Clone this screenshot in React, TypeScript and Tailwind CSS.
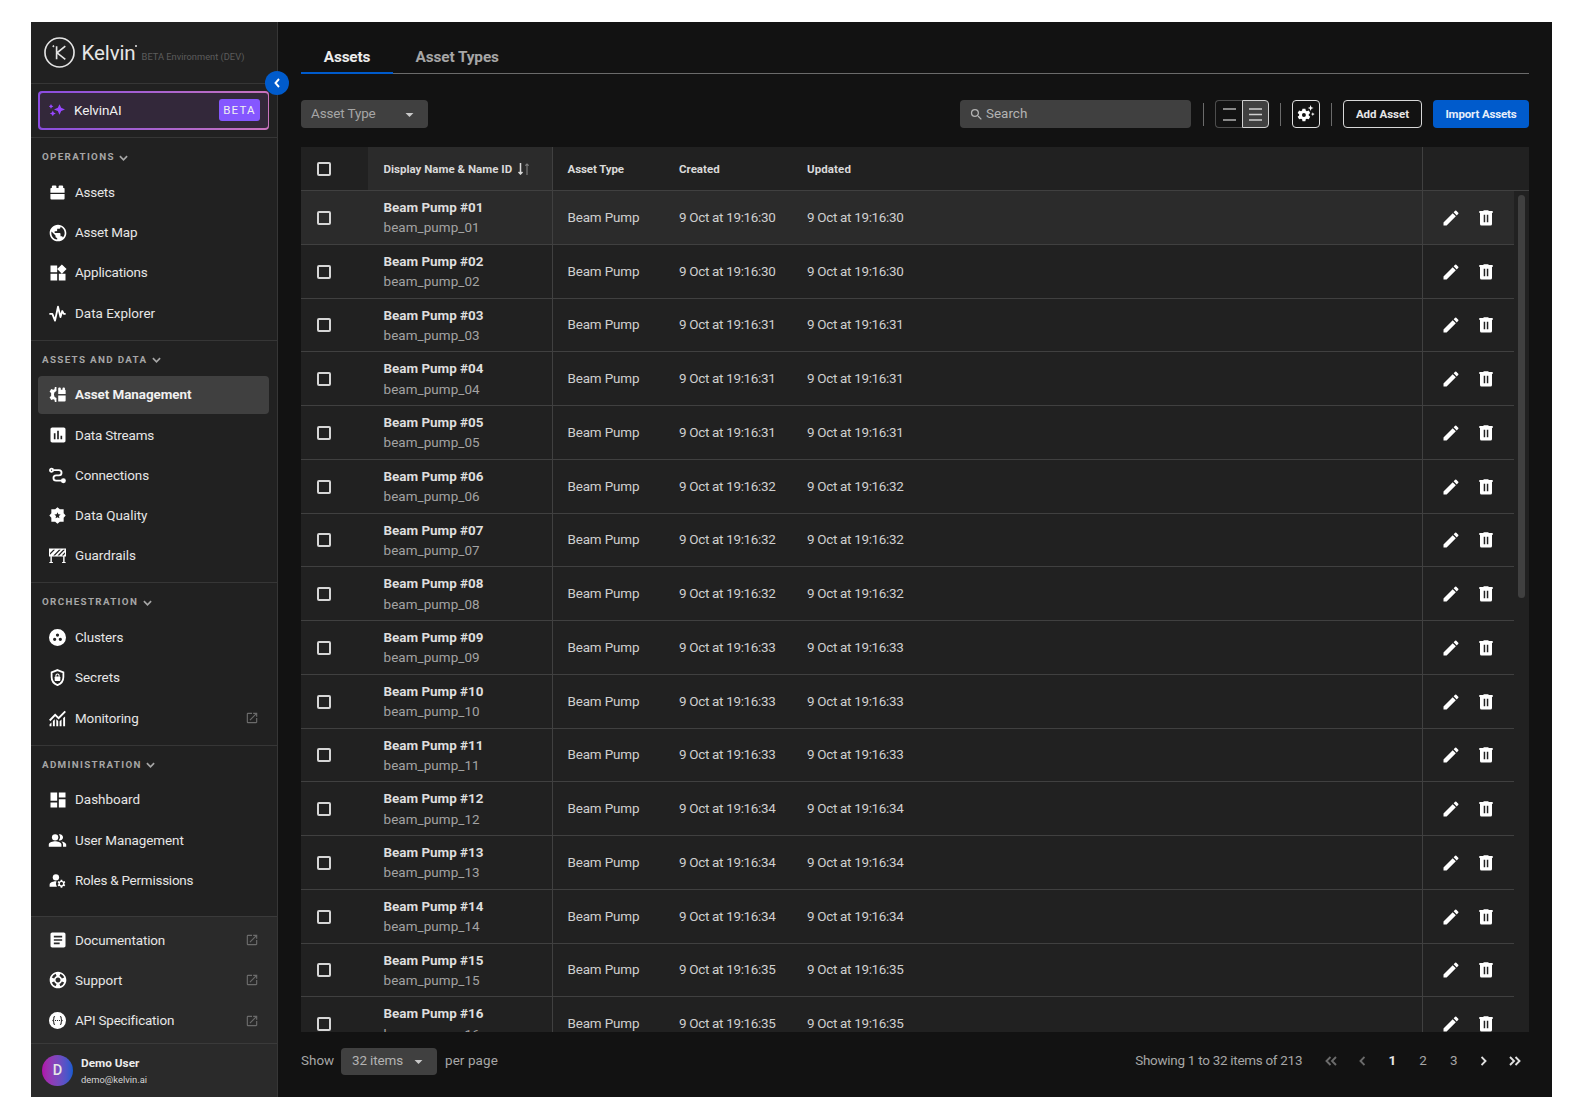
import type { ReactNode } from 'react';
import clsx from 'clsx';
import {
  MdArrowDropDown,
  MdArticle,
  MdDashboard,
  MdEdit,
  MdInsertChart,
  MdManageAccounts,
  MdOpenInNew,
  MdPeopleAlt,
  MdPublic,
  MdSearch,
  MdSupport,
  MdWidgets,
} from 'react-icons/md';

interface IconProps {
  className?: string;
}

interface NavEntry {
  label: string;
  icon: ReactNode;
  active?: boolean;
  external?: boolean;
  tracking?: string;
}

interface NavGroup {
  title: string;
  items: NavEntry[];
}

function Svg({ className, children }: IconProps & { children: ReactNode }) {
  return (
    <svg viewBox="0 0 24 24" fill="currentColor" className={clsx('size-[17px] shrink-0', className)}>
      {children}
    </svg>
  );
}

const BrickIcon = () => (
  <Svg>
    <path d="M4 5.800V3.500Q4 2 5.500 2H9q1.500 0 1.500 1.500v2.300h3V3.500Q13.500 2 15 2h3.500Q20 2 20 3.500v2.300h1q1 0 1 1V12.500H2V6.800q0-1 1-1ZM2 14h20V20.500q0 1.500-1.500 1.500h-17Q2 22 2 20.500Z" />
  </Svg>
);

const PulseIcon = () => (
  <Svg>
    <path
      d="M.5 12.500h4.200L8.500 22 12.700 2.500l3.500 14.500 2.500-8.500 2.200 4H23.500"
      fill="none"
      stroke="currentColor"
      strokeWidth="2.600"
      strokeLinejoin="round"
    />
  </Svg>
);

const AssetGearIcon = () => (
  <Svg>
    <path d="M10.500 1.500v5.700a5 5 0 0 0 0 9.600v5.700H8.300l-.6-3-1.700-.9-2.900 1L.8 16l2.200-1.900v-4.200L.8 8l2.300-3.600 2.900 1 1.700-.9.6-3Z" />
    <path d="M13 5.500V3.500Q13 2 14.500 2h.7Q16.700 2 16.700 3.500v1.700h2.300V3.500Q19 2 20.500 2h.5q1.500 0 1.500 1.500v1.700q1 0 1 1v5H13ZM13 13.500h10.500V20.500q0 1.500-1.500 1.500h-9Z" />
  </Svg>
);

const RouteIcon = () => (
  <Svg>
    <g fill="none" stroke="currentColor" strokeWidth="2.600">
      <circle cx="3.600" cy="4.500" r="2.200" />
      <path d="M6 4.500h8a3.700 3.700 0 0 1 0 7.400H10a3.700 3.700 0 0 0 0 7.400h8" />
    </g>
    <circle cx="20.300" cy="19.300" r="3.500" />
  </Svg>
);

const QualityIcon = () => (
  <Svg>
    <path
      fillRule="evenodd"
      d="M12 .5 15.300 3.300h5.400v5.400L23.500 12 20.700 15.300v5.400h-5.400L12 23.500 8.700 20.700H3.300v-5.400L.5 12 3.300 8.700V3.300h5.400ZM12 7.500l-1.300 2.900-3.100.3 2.300 2.100-.6 3.100 2.700-1.600 2.700 1.600-.6-3.100 2.300-2.100-3.100-.3Z"
    />
  </Svg>
);

const BarrierIcon = () => (
  <Svg>
    <path
      fillRule="evenodd"
      d="M0 2h24v11.500h-2V21h1.500v1.500h-5V21H20v-7.500H4V21h1.500v1.500h-5V21H2v-7.500H0ZM1.500 11 8.500 3.800H6L1.500 8.300ZM6 12h2.500l8-8.200H14ZM12 12h2.500l8-8V3.800H20ZM18 12h2.500l2-2V7.300Z"
    />
  </Svg>
);

const ClusterIcon = () => (
  <Svg>
    <path
      fillRule="evenodd"
      d="M12 0a12 12 0 1 0 0 24 12 12 0 0 0 0-24Zm0 6.200a2.300 2.300 0 1 1 0 4.600 2.300 2.300 0 0 1 0-4.600Zm-4 6.100a2.300 2.300 0 1 1 0 4.600 2.300 2.300 0 0 1 0-4.600Zm8 0a2.300 2.300 0 1 1 0 4.600 2.300 2.300 0 0 1 0-4.600Z"
    />
  </Svg>
);

const ShieldLockIcon = () => (
  <Svg>
    <path
      d="M12 1.500 20.300 4.800v6.500c0 5.200-3.300 9.600-8.300 11.400C7 20.900 3.700 16.500 3.700 11.300V4.800Z"
      fill="none"
      stroke="currentColor"
      strokeWidth="2.500"
    />
    <rect x="8" y="10.500" width="8" height="6.500" rx="1" />
    <path d="M9.800 11V9.200a2.200 2.200 0 0 1 4.400 0V11" fill="none" stroke="currentColor" strokeWidth="1.600" />
  </Svg>
);

const MonitoringIcon = () => (
  <Svg>
    <path d="M.8 23v-3l2.700-2.500V23ZM5.500 23v-7.500L8.200 13v10ZM10.300 23V13l2.700 2.500V23ZM15 23v-7.200l2.700-2.300V23ZM20 23V11.300L22.700 9v14Z" />
    <path d="m1 14.800 7.700-8 4.800 4.700L23 2" fill="none" stroke="currentColor" strokeWidth="2.700" />
  </Svg>
);

const ApiIcon = () => (
  <Svg>
    <circle cx="12" cy="12" r="12" />
    <g stroke="#2a2a2a" fill="none" strokeWidth="1.500">
      <path d="M8.500 6.500C6.500 6.500 6.800 8 6.800 9.500S6 12 4.800 12c1.200 0 2 1 2 2.500s-.3 3 1.700 3M15.500 6.500c2 0 1.700 1.500 1.700 3S18 12 19.200 12c-1.200 0-2 1-2 2.500s.3 3-1.700 3" />
      <path d="M8.300 12h1.600M11.200 12h1.600M14.100 12h1.600" strokeWidth="1.700" />
    </g>
  </Svg>
);

const SparklesIcon = () => (
  <svg viewBox="0 0 16 12" className="h-[12px] w-[16px] shrink-0 fill-[#9747ff]">
    <path d="m10.500.2 1.700 3.500L16 5.400l-3.800 1.700-1.700 3.700-1.700-3.700L5 5.400l3.800-1.700ZM2 0l.8 1.600 1.600.8-1.600.8L2 4.800l-.8-1.600L-.4 2.400l1.600-.8ZM3.800 6.500l.9 2.100 2.100.9-2.100.9-.9 2-.9-2-2.100-.9 2.100-.9Z" />
  </svg>
);

const GearPlusIcon = () => (
  <svg viewBox="0 0 24 24" className="size-[17.500px] fill-white">
    <path
      fillRule="evenodd"
      d="M7.500 5h4l.5 2.600 1.500.8 2.600-.9 2 3.400-2 1.800v1.700l2 1.800-2 3.400-2.600-.9-1.500.8-.5 2.700h-4L7 19.500l-1.500-.8-2.600.9-2-3.400 2-1.800v-1.700l-2-1.800 2-3.400 2.600.9L7 7.600ZM9.500 10.900a2.700 2.700 0 1 0 0 5.400 2.700 2.700 0 0 0 0-5.400Z"
    />
    <path d="m18.700 0 1.100 3 3 1.100-3 1.100-1.100 3-1.100-3-3-1.100 3-1.100ZM21.700 10l.7 1.800 1.800.7-1.800.7L21.700 15l-.7-1.800-1.800-.7 1.800-.7Z" />
  </svg>
);

const TrashIcon = () => (
  <svg viewBox="0 0 14 16" className="h-[16px] w-[14px] fill-white">
    <path
      fillRule="evenodd"
      d="M4.500.3h5v.8H13.700V3H13v11q0 1.500-1.500 1.500h-9Q1 15.500 1 14V3H.3V1.100h4.200ZM4.700 4.700v7.600h1.500V4.700ZM7.800 4.700v7.600h1.500V4.700Z"
    />
  </svg>
);

function Chevron({ className, d = 'M1 1l4 4 4-4', box = '0 0 10 6' }: IconProps & { d?: string; box?: string }) {
  return (
    <svg viewBox={box} className={className} fill="none" stroke="currentColor" strokeWidth="1.900">
      <path d={d} />
    </svg>
  );
}

const mdIcon = 'size-[19px] shrink-0';

const groups: NavGroup[] = [
  {
    title: 'Operations',
    items: [
      { label: 'Assets', icon: <BrickIcon />, tracking: 'tracking-[-0.25px]' },
      { label: 'Asset Map', icon: <MdPublic className="size-[20px] shrink-0" />, tracking: 'tracking-[-0.2px]' },
      { label: 'Applications', icon: <MdWidgets className="size-[20px] shrink-0" />, tracking: 'tracking-[-0.15px]' },
      { label: 'Data Explorer', icon: <PulseIcon /> },
    ],
  },
  {
    title: 'Assets and Data',
    items: [
      { label: 'Asset Management', icon: <AssetGearIcon />, active: true, tracking: 'tracking-[-0.07px]' },
      { label: 'Data Streams', icon: <MdInsertChart className="size-[20px] shrink-0" />, tracking: 'tracking-[-0.17px]' },
      { label: 'Connections', icon: <RouteIcon />, tracking: 'tracking-[-0.1px]' },
      { label: 'Data Quality', icon: <QualityIcon /> },
      { label: 'Guardrails', icon: <BarrierIcon /> },
    ],
  },
  {
    title: 'Orchestration',
    items: [
      { label: 'Clusters', icon: <ClusterIcon />, tracking: 'tracking-[-0.15px]' },
      { label: 'Secrets', icon: <ShieldLockIcon /> },
      { label: 'Monitoring', icon: <MonitoringIcon />, external: true, tracking: 'tracking-[-0.12px]' },
    ],
  },
  {
    title: 'Administration',
    items: [
      { label: 'Dashboard', icon: <MdDashboard className="size-[20px] shrink-0" /> },
      { label: 'User Management', icon: <MdPeopleAlt className={mdIcon} />, tracking: 'tracking-[-0.07px]' },
      { label: 'Roles & Permissions', icon: <MdManageAccounts className={mdIcon} />, tracking: 'tracking-[-0.23px]' },
    ],
  },
];

const helpLinks: NavEntry[] = [
  {
    label: 'Documentation',
    icon: <MdArticle className="size-[20px] shrink-0" />,
    external: true,
    tracking: 'tracking-[-0.12px]',
  },
  { label: 'Support', icon: <MdSupport className="size-[20px] shrink-0" />, external: true },
  { label: 'API Specification', icon: <ApiIcon />, external: true, tracking: 'tracking-[-0.18px]' },
];

const seconds = [30, 30, 31, 31, 31, 32, 32, 32, 33, 33, 33, 34, 34, 34, 35, 35];

const assets = seconds.map((sec, i) => {
  const num = String(i + 1).padStart(2, '0');
  return { name: `Beam Pump #${num}`, id: `beam_pump_${num}`, time: `9 Oct at 19:16:${sec}` };
});

function NavItem({ label, icon, active, external, tracking }: NavEntry) {
  return (
    <a
      className={clsx(
        'mr-[8px] mb-[1.600px] ml-[7px] flex h-[38.700px] items-center rounded-[4px] pr-[10.500px] pl-[10px] text-[13.440px]',
        active ? 'bg-[#404040] font-bold text-[#f0f0f0]' : 'text-[#e6e6e6]'
      )}
    >
      <span className="flex w-[19px] shrink-0 justify-center text-white">{icon}</span>
      <span className={clsx('ml-[8px] flex-1 pt-[1px] whitespace-nowrap', tracking)}>{label}</span>
      {external && <MdOpenInNew className="size-[14px] text-[#6b6b6b]" />}
    </a>
  );
}

function Sidebar() {
  return (
    <aside className="relative flex w-[247px] shrink-0 flex-col border-r border-[#363636] bg-[#212121]">
      {/* Logo */}
      <div className="flex h-[61.500px] items-center border-b border-[#363636] pl-[12.500px]">
        <svg viewBox="0 0 32 32" className="size-[31px]" fill="none" stroke="#e4e4e4" strokeWidth="1.700">
          <circle cx="16" cy="16" r="15" />
          <path d="M13 9.500v13.500M22 9.500l-8.500 6.800L22 23" />
          <circle cx="9.700" cy="9.500" r=".6" fill="#e4e4e4" strokeWidth="1" />
        </svg>
        <span className="mt-px ml-[7px] text-[20.500px] leading-none font-normal tracking-[-0.1px] text-[#e6e6e6]">
          Kelvin
        </span>
        <span className="-mt-[13px] -ml-[1px] size-[2px] rounded-full bg-[#e4e4e4]" />
        <span className="mt-[10px] ml-[5px] text-[9.300px] whitespace-nowrap text-[#5c5c5c]">BETA Environment (DEV)</span>
      </div>

      {/* KelvinAI */}
      <div className="h-[54.500px] shrink-0 border-b border-[#363636] pt-[7.500px] pr-[8px] pl-[7px]">
        <div className="h-[38.500px] rounded-[4px] bg-linear-to-r from-[#8a4be0] to-[#c873bd] p-[1.500px]">
          <div className="flex h-full items-center rounded-[3px] bg-[#33283a] pr-[8px] pl-[9.500px] text-[13.440px] text-[#f0f0f0]">
            <SparklesIcon />
            <span className="ml-[9px] flex-1 pt-[1px] tracking-[-0.1px]">KelvinAI</span>
            <span className="flex h-[22px] w-[41px] items-center justify-center rounded-[3px] bg-[#8557ff] pl-px text-[11.500px] tracking-[1.200px]">
              BETA
            </span>
          </div>
        </div>
      </div>

      <span className="absolute top-[49px] right-[-12px] flex size-[24px] items-center justify-center rounded-full bg-[#005bcc] text-white">
        <Chevron className="h-[10px] w-[6px]" d="M5 1 1.500 5 5 9" box="0 0 6 10" />
      </span>

      {groups.map((group, i) => (
        <section key={group.title} className={clsx('pb-[5.400px]', i < groups.length - 1 && 'border-b border-[#363636]')}>
          <h3 className="flex h-[35px] items-center pt-[4px] pl-[11px] text-[9.800px] font-bold tracking-[1.330px] text-[#a6a6a6] uppercase">
            {group.title}
            <Chevron className="ml-[4.500px] h-[6px] w-[9px]" />
          </h3>
          {group.items.map((item) => (
            <NavItem key={item.label} {...item} />
          ))}
        </section>
      ))}

      {/* Help links and account */}
      <div className="mt-auto border-t border-[#3a3a3a] bg-[#2a2a2a] pt-[4px]">
        {helpLinks.map((item) => (
          <NavItem key={item.label} {...item} />
        ))}
        <div className="mt-[3px] flex h-[54px] items-center border-t border-[#3a3a3a] pl-[11px]">
          <span className="flex size-[31px] items-center justify-center rounded-full bg-linear-to-r from-[#b10dab] to-[#0d5bd0] text-[14.500px] font-medium text-[#e6e6e6]">
            D
          </span>
          <div className="ml-[8px] pt-px">
            <p className="text-[11.800px] leading-[17px] font-bold text-[#ececec]">Demo User</p>
            <p className="text-[9.400px] leading-[16px] text-[#d6d6d6]">demo@kelvin.ai</p>
          </div>
        </div>
      </div>
    </aside>
  );
}

function Separator() {
  return <span className="h-[23px] w-px bg-[#6b6b6b]" />;
}

function Toolbar() {
  return (
    <div className="mt-[26px] flex h-[28px] items-center">
      <button className="flex h-[28px] w-[127px] items-center justify-between rounded-[4px] bg-[#404040] pt-px pr-[9px] pl-[10px] text-[13.440px] tracking-[-0.12px] text-[#a6a6a6]">
        Asset Type
        <MdArrowDropDown className="size-[19px] text-[#c8c8c8]" />
      </button>
      <div className="ml-auto flex h-[28px] w-[231px] items-center rounded-[4px] bg-[#404040] pt-px pl-[9px] text-[13.440px] text-[#b3b3b3]">
        <MdSearch className="mr-[2px] size-[15px]" />
        Search
      </div>
      <span className="w-[11.500px]" />
      <Separator />
      <div className="ml-[11.500px] flex h-[28px] w-[54px]">
        <span className="flex flex-1 items-center justify-center rounded-l-[4px] border border-r-0 border-[#4d4d4d] text-[#b0b0b0]">
          <svg viewBox="0 0 13 13" className="size-[13px] stroke-current" strokeWidth="1.500">
            <path d="M0 1h13M0 12h13" />
          </svg>
        </span>
        <span className="flex w-[27px] items-center justify-center rounded-r-[4px] border border-[#d0d0d0] bg-[#404040] text-[#d0d0d0]">
          <svg viewBox="0 0 13 13" className="size-[13px] stroke-current" strokeWidth="1.500">
            <path d="M0 1h13M0 6.500h13M0 12h13" />
          </svg>
        </span>
      </div>
      <span className="w-[11px]" />
      <Separator />
      <button className="ml-[11px] flex h-[28px] w-[28px] items-center justify-center rounded-[4px] border-[1.500px] border-[#e0e0e0]">
        <GearPlusIcon />
      </button>
      <span className="w-[11px]" />
      <Separator />
      <button className="ml-[11px] h-[28px] w-[79px] rounded-[4px] border-[1.500px] border-[#d8d8d8] pt-[2px] text-[11.520px] leading-none font-bold text-[#e6e6e6]">
        Add Asset
      </button>
      <button className="ml-[11px] h-[28px] w-[96px] rounded-[4px] bg-[#005bcc] pt-[2px] text-[11.520px] leading-none font-bold tracking-[-0.15px] text-[#e6eefa]">
        Import Assets
      </button>
    </div>
  );
}

function Checkbox() {
  return <span className="block size-[14px] rounded-[2px] border-2 border-[#d6d6d6]" />;
}

function AssetTable() {
  return (
    <div className="mt-[19px] flex h-[885px] flex-col overflow-hidden bg-[#212121]">
      <div className="flex h-[44px] shrink-0 items-stretch border-b border-[#404040] text-[11.520px] font-bold text-[#d9d9d9]">
        <div className="flex w-[67px] items-center pl-[16px]">
          <Checkbox />
        </div>
        <div className="flex w-[185px] items-center border-r border-[#404040] bg-[#2b2b2b] pt-[2px] pl-[15.500px]">
          Display Name & Name ID
          <svg viewBox="0 0 12 12" className="-mt-[2px] ml-[6px] size-[12px]" fill="none">
            <path d="M2.500 0v11M.5 9 2.500 11l2-2" stroke="#d9d9d9" strokeWidth="1.500" />
            <path d="M9 12V1M7.300 2.700 9 1l1.700 1.700" stroke="#808080" strokeWidth="1.100" />
          </svg>
        </div>
        <div className="flex w-[126px] items-center pt-[2px] pl-[14.500px] tracking-[-0.1px]">Asset Type</div>
        <div className="flex w-[128px] items-center pt-[2px]">Created</div>
        <div className="flex flex-1 items-center pt-[2px] tracking-[0.1px]">Updated</div>
        <div className="w-[107px] border-l border-[#404040]" />
      </div>
      <div className="flex min-h-0 flex-1">
        <div className="flex-1">
          {assets.map((asset, i) => (
            <div
              key={asset.id}
              className={clsx(
                'flex h-[53.760px] items-stretch border-b border-[#404040] text-[13.440px] text-[#cfcfcf]',
                i === 0 && 'bg-[#2b2b2b]'
              )}
            >
              <div className="flex w-[67px] items-center pt-px pl-[16px]">
                <Checkbox />
              </div>
              <div className="flex w-[185px] flex-col justify-center border-r border-[#404040] pt-[2px] pl-[15.500px] leading-[20.200px]">
                <p className="font-bold tracking-[-0.02px] text-[#dedede]">{asset.name}</p>
                <p className="tracking-[0.08px] text-[#a3a3a3]">{asset.id}</p>
              </div>
              <div className="flex w-[126px] items-center pt-[1px] pl-[14.500px] tracking-[-0.15px]">Beam Pump</div>
              <div className="flex w-[128px] items-center pt-[1px] tracking-[-0.31px]">{asset.time}</div>
              <div className="flex flex-1 items-center pt-[1px] tracking-[-0.31px]">{asset.time}</div>
              <div className="flex w-[92px] items-center border-l border-[#404040] pt-px pl-[18px]">
                <MdEdit className="mr-[17.500px] size-[20px] text-white" />
                <TrashIcon />
              </div>
            </div>
          ))}
        </div>
        <div className="w-[15px] pt-[4px] pl-[4px]">
          <div className="h-[403px] w-[7px] rounded-full bg-[#404040]" />
        </div>
      </div>
    </div>
  );
}

function Pagination() {
  return (
    <div className="mt-[15px] flex h-[28px] items-center text-[13.440px] text-[#a6a6a6]">
      <span className="w-[40px] pt-px">Show</span>
      <button className="flex h-[27px] w-[96px] items-center justify-between rounded-[4px] bg-[#404040] pt-px pr-[9px] pl-[11px] tracking-[-0.12px] text-[#b3b3b3]">
        32 items
        <MdArrowDropDown className="size-[19px] text-[#c8c8c8]" />
      </button>
      <span className="ml-[8px] pt-px tracking-[0.1px]">per page</span>
      <span className="ml-auto pt-px tracking-[-0.27px]">Showing 1 to 32 items of 213</span>
      <div className="-mr-[1.500px] ml-[13.500px] grid grid-cols-[repeat(7,30.700px)] justify-items-center">
        <Chevron className="h-[10px] w-[12px] self-center text-[#6b6b6b]" d="M5.500 1 1.500 5l4 4M11 1 7 5l4 4" box="0 0 12 10" />
        <Chevron className="h-[10px] w-[6px] self-center text-[#6b6b6b]" d="M5.500 1 1.500 5l4 4" box="0 0 6 10" />
        <span className="font-bold text-[#e6e6e6]">1</span>
        <span>2</span>
        <span>3</span>
        <Chevron className="h-[10px] w-[6px] self-center text-[#e0e0e0]" d="m.500 1 4 4-4 4" box="0 0 6 10" />
        <Chevron className="h-[10px] w-[12px] self-center text-[#e0e0e0]" d="m1 1 4 4-4 4M6.500 1l4 4-4 4" box="0 0 12 10" />
      </div>
    </div>
  );
}

export default function App() {
  return (
    <div className="h-[1120px] w-[1584px] bg-white pt-[22px] pl-[31px] font-['Roboto',sans-serif]">
      <div className="flex h-[1075px] w-[1521px] overflow-hidden bg-[#121212]">
        <Sidebar />
        <main className="flex w-[1274px] flex-col pr-[23px] pl-[23px]">
          <nav className="flex h-[52px] items-end border-b border-[#6b6b6b] text-[15.360px] font-bold">
            <span className="-mb-px flex h-[34px] w-[92px] items-center justify-center border-b-2 border-[#005bcc] pt-[3px] tracking-[-0.2px] text-[#ececec]">
              Assets
            </span>
            <span className="ml-[22.500px] flex h-[33px] items-center pt-[3px] tracking-[-0.1px] text-[#a6a6a6]">
              Asset Types
            </span>
          </nav>
          <Toolbar />
          <AssetTable />
          <Pagination />
        </main>
      </div>
    </div>
  );
}
